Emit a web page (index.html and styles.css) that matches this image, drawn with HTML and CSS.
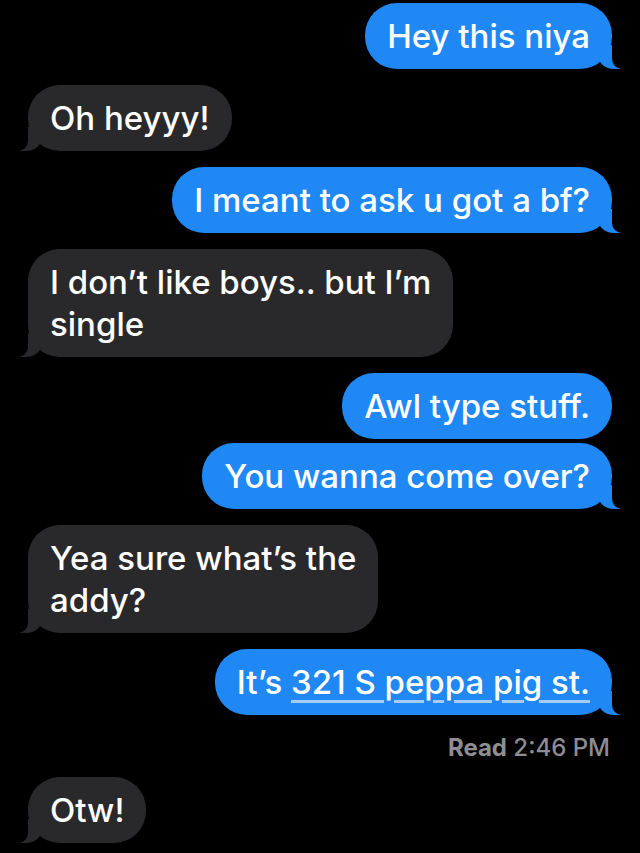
FILE: index.html
```html
<!DOCTYPE html>
<html lang="en">
<head>
<meta charset="UTF-8">
<meta name="viewport" content="width=device-width, initial-scale=1.0">
<title>Messages</title>
<link rel="stylesheet" href="styles.css">
</head>
<body>
<div class="thread">
  <div class="bubble sent tail">Hey this niya</div>
  <div class="bubble got tail">Oh heyyy!</div>
  <div class="bubble sent tail">I meant to ask u got a bf?</div>
  <div class="bubble got tail">I don’t like boys.. but I’m<br>single</div>
  <div class="bubble sent">Awl type stuff.</div>
  <div class="bubble sent tail next">You wanna come over?</div>
  <div class="bubble got tail">Yea sure what’s the<br>addy?</div>
  <div class="bubble sent tail">It’s <span class="link">321 S peppa pig st.</span></div>
  <div class="receipt"><b>Read</b> 2:46 PM</div>
  <div class="bubble got tail">Otw!</div>
</div>
</body>
</html>
```

FILE: styles.css
```css
body {
  margin: 0;
  background: #000;
  font-family: 'Inter', 'Liberation Sans', sans-serif;
  color: #fff;
  overflow: hidden;
}
.thread {
  display: flex;
  flex-direction: column;
  padding: 3px 28px 0 28px;
}
.bubble {
  position: relative;
  box-sizing: border-box;
  max-width: 460px;
  padding: 12px 22px;
  font-size: 33px;
  font-weight: 500;
  line-height: 42px;
  white-space: nowrap;
  border-radius: 32px;
  margin-top: 16px;
}
.bubble:first-child {
  margin-top: 0;
}
.bubble.next {
  margin-top: 4px;
}
.sent {
  align-self: flex-end;
  background: #1f88f4;
}
.got {
  align-self: flex-start;
  background: #29292b;
}
/* tails */
.tail::before,
.tail::after {
  content: "";
  position: absolute;
  bottom: 0;
  height: 24px;
}
.sent.tail::before {
  right: -8px;
  width: 22px;
  background: #1f88f4;
  border-bottom-left-radius: 16px 14px;
}
.sent.tail::after {
  right: -26px;
  width: 26px;
  background: #000;
  border-bottom-left-radius: 10px;
}
.got.tail::before {
  left: -8px;
  width: 22px;
  background: #29292b;
  border-bottom-right-radius: 16px 14px;
}
.got.tail::after {
  left: -26px;
  width: 26px;
  background: #000;
  border-bottom-right-radius: 10px;
}
.link {
  text-decoration: underline;
  text-decoration-color: #a3cdf6;
  text-decoration-thickness: 3px;
  text-underline-offset: 6px;
}
.receipt {
  align-self: flex-end;
  margin: 20px 2px 0 0;
  font-size: 24px;
  line-height: 26px;
  font-weight: 500;
  color: #8d8d92;
}
.receipt b {
  font-weight: 700;
}
```
